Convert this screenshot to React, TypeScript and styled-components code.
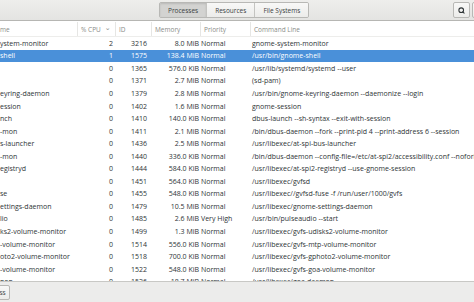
import React from "react";
import styled, { createGlobalStyle } from "styled-components";
import { Search } from "lucide-react";

interface Proc {
  name: string;
  cpu: string;
  id: string;
  memory: string;
  priority: string;
  command: string;
}

const procs: Proc[] = [
  { name: "ystem-monitor", cpu: "2", id: "3216", memory: "8.0 MiB", priority: "Normal", command: "gnome-system-monitor" },
  { name: "shell", cpu: "1", id: "1575", memory: "138.4 MiB", priority: "Normal", command: "/usr/bin/gnome-shell" },
  { name: "", cpu: "0", id: "1365", memory: "576.0 KiB", priority: "Normal", command: "/usr/lib/systemd/systemd --user" },
  { name: "", cpu: "0", id: "1371", memory: "2.7 MiB", priority: "Normal", command: "(sd-pam)" },
  { name: "eyring-daemon", cpu: "0", id: "1379", memory: "2.8 MiB", priority: "Normal", command: "/usr/bin/gnome-keyring-daemon --daemonize --login" },
  { name: "ession", cpu: "0", id: "1402", memory: "1.6 MiB", priority: "Normal", command: "gnome-session" },
  { name: "nch", cpu: "0", id: "1410", memory: "140.0 KiB", priority: "Normal", command: "dbus-launch --sh-syntax --exit-with-session" },
  { name: "-mon", cpu: "0", id: "1411", memory: "2.1 MiB", priority: "Normal", command: "/bin/dbus-daemon --fork --print-pid 4 --print-address 6 --session" },
  { name: "s-launcher", cpu: "0", id: "1436", memory: "2.5 MiB", priority: "Normal", command: "/usr/libexec/at-spi-bus-launcher" },
  { name: "-mon", cpu: "0", id: "1440", memory: "336.0 KiB", priority: "Normal", command: "/bin/dbus-daemon --config-file=/etc/at-spi2/accessibility.conf --nofork --print-address 3" },
  { name: "egistryd", cpu: "0", id: "1444", memory: "584.0 KiB", priority: "Normal", command: "/usr/libexec/at-spi2-registryd --use-gnome-session" },
  { name: "", cpu: "0", id: "1451", memory: "564.0 KiB", priority: "Normal", command: "/usr/libexec/gvfsd" },
  { name: "se", cpu: "0", id: "1455", memory: "548.0 KiB", priority: "Normal", command: "/usr/libexec//gvfsd-fuse -f /run/user/1000/gvfs" },
  { name: "ettings-daemon", cpu: "0", id: "1479", memory: "10.5 MiB", priority: "Normal", command: "/usr/libexec/gnome-settings-daemon" },
  { name: "lio", cpu: "0", id: "1485", memory: "2.6 MiB", priority: "Very High", command: "/usr/bin/pulseaudio --start" },
  { name: "ks2-volume-monitor", cpu: "0", id: "1499", memory: "1.3 MiB", priority: "Normal", command: "/usr/libexec/gvfs-udisks2-volume-monitor" },
  { name: "-volume-monitor", cpu: "0", id: "1514", memory: "556.0 KiB", priority: "Normal", command: "/usr/libexec/gvfs-mtp-volume-monitor" },
  { name: "oto2-volume-monitor", cpu: "0", id: "1518", memory: "700.0 KiB", priority: "Normal", command: "/usr/libexec/gvfs-gphoto2-volume-monitor" },
  { name: "-volume-monitor", cpu: "0", id: "1522", memory: "548.0 KiB", priority: "Normal", command: "/usr/libexec/gvfs-goa-volume-monitor" },
  { name: "non", cpu: "0", id: "1526", memory: "18.7 MiB", priority: "Normal", command: "/usr/libexec/goa-daemon" },
];

const COLS = "77px 38px 36px 49px 50px 1fr";

export default function App() {
  return (
    <>
      <GlobalStyle />
      <Window>
        <HeaderBar>
          <Switcher>
            <SwitchButton $active>Processes</SwitchButton>
            <SwitchButton>Resources</SwitchButton>
            <SwitchButton>File Systems</SwitchButton>
          </Switcher>
          <ToolButton>
            <Search size={7} strokeWidth={3.5} color="#2e3436" />
          </ToolButton>
          <ToolButton $clipped />
        </HeaderBar>
        <Table>
          <ColumnHeader>
            <HeadCell>me</HeadCell>
            <HeadCell $sep>
              % CPU <Chevron>⌄</Chevron>
            </HeadCell>
            <HeadCell $sep>ID</HeadCell>
            <HeadCell $sep>Memory</HeadCell>
            <HeadCell $sep>Priority</HeadCell>
            <HeadCell $sep>Command Line</HeadCell>
          </ColumnHeader>
          <Rows>
            {procs.map((p, i) => (
              <Row key={p.id} $selected={i === 1}>
                <Cell>{p.name}</Cell>
                <NumCell>{p.cpu}</NumCell>
                <NumCell $pad={4}>{p.id}</NumCell>
                <NumCell $pad={1}>{p.memory}</NumCell>
                <Cell $pad={1}>{p.priority}</Cell>
                <Cell $pad={2}>{p.command}</Cell>
              </Row>
            ))}
          </Rows>
        </Table>
        <ActionBar>
          <EndButton>End Process</EndButton>
        </ActionBar>
      </Window>
    </>
  );
}

const GlobalStyle = createGlobalStyle`
  html, body {
    margin: 0;
    padding: 0;
    background: #ffffff;
  }
  body {
    font-family: "Open Sans", "DejaVu Sans", sans-serif;
    font-size: 7px;
    color: #2e3436;
  }
`;

const Window = styled.div`
  width: 474px;
  height: 302px;
  display: flex;
  flex-direction: column;
  overflow: hidden;
  background: #ffffff;
`;

const HeaderBar = styled.div`
  height: 21px;
  flex: none;
  display: flex;
  align-items: center;
  padding-left: 159px;
  box-sizing: border-box;
  overflow: hidden;
  background: linear-gradient(#eeeeec, #e4e4e2);
  border-bottom: 1px solid #b6b6b3;
`;

const Switcher = styled.div`
  display: flex;
  height: 16px;
  margin-right: auto;
  border: 1px solid #b8b8b5;
  border-radius: 2px;
  overflow: hidden;
  box-sizing: border-box;
`;

const SwitchButton = styled.div<{ $active?: boolean }>`
  display: flex;
  align-items: center;
  padding: 0 8px;
  font-size: 6.5px;
  color: #3b3f41;
  background: ${(p) => (p.$active ? "#d3d3d1" : "linear-gradient(#f8f8f7, #ececea)")};
  box-shadow: ${(p) => (p.$active ? "inset 0 1px 2px rgba(0,0,0,0.12)" : "none")};
  & + & {
    border-left: 1px solid #c4c4c1;
  }
`;

const ToolButton = styled.div<{ $clipped?: boolean }>`
  width: 17px;
  height: 16px;
  flex: none;
  margin-left: ${(p) => (p.$clipped ? "2px" : "0")};
  margin-right: ${(p) => (p.$clipped ? "-15px" : "0")};
  display: flex;
  align-items: center;
  justify-content: center;
  box-sizing: border-box;
  border: 1px solid #b8b8b5;
  border-radius: 2px;
  background: linear-gradient(#f8f8f7, #ececea);
`;

const Table = styled.div`
  flex: 1;
  min-height: 0;
  overflow: hidden;
  display: flex;
  flex-direction: column;
`;

const ColumnHeader = styled.div`
  display: grid;
  grid-template-columns: ${COLS};
  height: 14px;
  flex: none;
  margin-top: 1px;
  border-bottom: 1px solid #ededeb;
`;

const HeadCell = styled.div<{ $sep?: boolean }>`
  display: flex;
  align-items: center;
  padding-left: 3px;
  font-size: 6.5px;
  color: #8a8c88;
  white-space: nowrap;
  border-left: ${(p) => (p.$sep ? "1px solid #e6e6e4" : "none")};
  &:first-child {
    padding-left: 0;
  }
`;

const Chevron = styled.span`
  margin-left: 4px;
  font-size: 7px;
  line-height: 1;
  position: relative;
  top: -2px;
`;

const Rows = styled.div`
  display: flex;
  flex-direction: column;
`;

const Row = styled.div<{ $selected?: boolean }>`
  display: grid;
  grid-template-columns: ${COLS};
  height: 12.55px;
  flex: none;
  align-items: center;
  background: ${(p) => (p.$selected ? "#4a90d9" : "transparent")};
  color: ${(p) => (p.$selected ? "#ffffff" : "#2e3436")};
`;

const Cell = styled.div<{ $pad?: number }>`
  padding-left: ${(p) => p.$pad ?? 0}px;
  white-space: nowrap;
  overflow: hidden;
`;

const NumCell = styled.div<{ $pad?: number }>`
  text-align: right;
  padding-right: ${(p) => p.$pad ?? 2}px;
  white-space: nowrap;
`;

const ActionBar = styled.div`
  height: 21px;
  flex: none;
  display: flex;
  align-items: center;
  box-sizing: border-box;
  background: #ececeb;
  border-top: 1px solid #c8c8c5;
`;

const EndButton = styled.div`
  height: 15px;
  display: flex;
  align-items: center;
  margin-left: -35px;
  padding: 0 3px;
  font-size: 6.5px;
  color: #3b3f41;
  border: 1px solid #b8b8b5;
  border-radius: 2px;
  background: linear-gradient(#f8f8f7, #ececea);
  box-sizing: border-box;
`;
